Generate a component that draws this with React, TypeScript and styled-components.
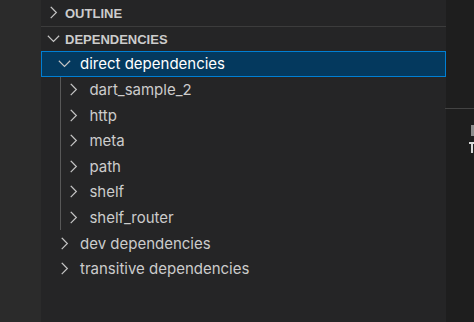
import React from "react";
import styled, { createGlobalStyle } from "styled-components";

const GlobalStyle = createGlobalStyle`
  html, body { margin: 0; padding: 0; background: #252526; }
  body { font-family: "Inter", "Liberation Sans", sans-serif; -webkit-font-smoothing: antialiased; }
  * { box-sizing: border-box; }
`;

const ROW = 25.6;

const Page = styled.div`
  display: flex;
  width: 474px;
  height: 322px;
  overflow: hidden;
`;

const LeftStrip = styled.div`
  width: 41px;
  flex: none;
  background: #2b2b2b;
`;

const Sidebar = styled.div`
  flex: 1;
  min-width: 0;
  background: #252526;
  display: flex;
  flex-direction: column;
`;

const Editor = styled.div`
  width: 28px;
  flex: none;
  background: #1e1e1e;
  display: flex;
  flex-direction: column;
  align-items: flex-end;
`;

const EditorTop = styled.div`
  align-self: stretch;
  height: 109px;
  border-bottom: 1px solid #434343;
  margin-left: -1px;
`;

const Tick = styled.div`
  margin-top: 16px;
  width: 3px;
  height: 11px;
  background: #8c8c8c;
`;

const CutGlyph = styled.div`
  margin-top: 6px;
  width: 5px;
  height: 11px;
  border-top: 2px solid #d8d8d8;
  position: relative;
  &::after {
    content: "";
    position: absolute;
    left: 2px;
    top: 0;
    width: 2px;
    height: 9px;
    background: #d8d8d8;
  }
`;

const Header = styled.div<{ $divider?: boolean }>`
  height: ${ROW}px;
  display: flex;
  align-items: center;
  padding-left: 3px;
  border-top: ${(p) => (p.$divider ? "1px solid #3c3c3c" : "none")};
  font-family: "Liberation Sans", Arial, sans-serif;
  font-weight: 700;
  font-size: 13px;
  color: #cccccc;
`;

const Twistie = styled.span`
  width: 19px;
  height: 19px;
  flex: none;
  display: flex;
  align-items: center;
  justify-content: center;
  color: #c5c5c5;
`;

const HeaderLabel = styled.span`
  margin-left: 2px;
  padding-top: 1px;
`;

const Row = styled.div<{ $level: number; $selected?: boolean }>`
  height: ${ROW}px;
  display: flex;
  align-items: center;
  padding-left: ${(p) => 14 + p.$level * 9.4}px;
  font-size: 15px;
  color: ${(p) => (p.$selected ? "#ffffff" : "#cccccc")};
  background: ${(p) => (p.$selected ? "#04395e" : "transparent")};
  box-shadow: ${(p) => (p.$selected ? "inset 0 0 0 1px #007fd4" : "none")};
`;

const Label = styled.span`
  margin-left: 6px;
  white-space: nowrap;
`;

const Group = styled.div`
  position: relative;
  &::before {
    content: "";
    position: absolute;
    left: 19px;
    top: 0;
    bottom: 0;
    width: 1px;
    background: #585858;
  }
`;

const Chevron = ({ open }: { open?: boolean }) => (
  <svg width="19" height="19" viewBox="0 0 16 16" fill="none">
    <polyline
      points={open ? "3.6,6 8,10.4 12.4,6" : "6,3.6 10.4,8 6,12.4"}
      stroke="currentColor"
      strokeWidth="1"
      strokeLinecap="square"
      strokeLinejoin="miter"
    />
  </svg>
);

const children = ["dart_sample_2", "http", "meta", "path", "shelf", "shelf_router"];

export default function App() {
  return (
    <>
      <GlobalStyle />
      <Page>
        <LeftStrip />
        <Sidebar>
          <Header>
            <Twistie>
              <Chevron />
            </Twistie>
            <HeaderLabel>OUTLINE</HeaderLabel>
          </Header>
          <Header $divider>
            <Twistie>
              <Chevron open />
            </Twistie>
            <HeaderLabel>DEPENDENCIES</HeaderLabel>
          </Header>
          <Row $level={0} $selected>
            <Twistie>
              <Chevron open />
            </Twistie>
            <Label>direct dependencies</Label>
          </Row>
          <Group>
            {children.map((c) => (
              <Row key={c} $level={1}>
                <Twistie>
                  <Chevron />
                </Twistie>
                <Label>{c}</Label>
              </Row>
            ))}
          </Group>
          <Row $level={0}>
            <Twistie>
              <Chevron />
            </Twistie>
            <Label>dev dependencies</Label>
          </Row>
          <Row $level={0}>
            <Twistie>
              <Chevron />
            </Twistie>
            <Label>transitive dependencies</Label>
          </Row>
        </Sidebar>
        <Editor>
          <EditorTop />
          <Tick />
          <CutGlyph />
        </Editor>
      </Page>
    </>
  );
}
